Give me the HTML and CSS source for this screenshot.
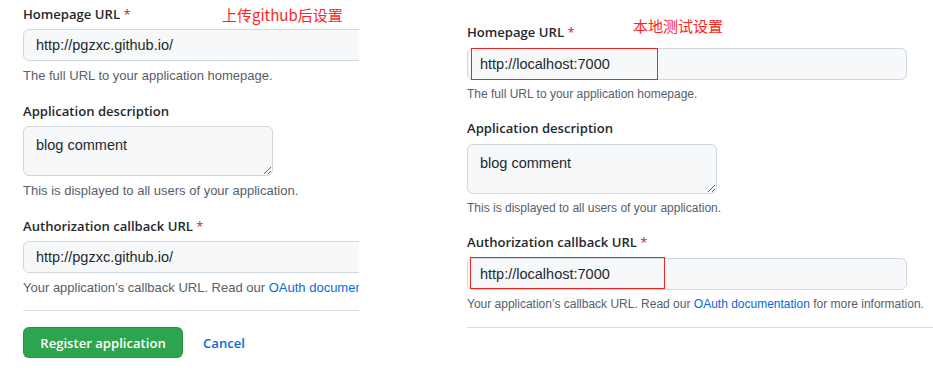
FILE: index.html
```html
<!DOCTYPE html>
<html lang="en">
<head>
<meta charset="utf-8">
<title>Register a new OAuth application</title>
<link rel="stylesheet" href="styles.css">
</head>
<body>
<div class="page">
  <section class="panel panel-left">
    <form class="form">
      <div class="field">
        <label class="label">Homepage URL <span class="req">*</span></label>
        <div class="input-wrap"><input class="input" type="text" value="http://pgzxc.github.io/"></div>
        <p class="note">The full URL to your application homepage.</p>
      </div>
      <div class="field">
        <label class="label">Application description</label>
        <textarea class="textarea">blog comment</textarea>
        <p class="note">This is displayed to all users of your application.</p>
      </div>
      <div class="field">
        <label class="label">Authorization callback URL <span class="req">*</span></label>
        <div class="input-wrap"><input class="input" type="text" value="http://pgzxc.github.io/"></div>
        <p class="note">Your application’s callback URL. Read our <a class="link" href="#">OAuth documentation</a> for more information.</p>
      </div>
      <hr class="rule">
      <div class="actions">
        <button class="btn-primary" type="button">Register application</button>
        <a class="cancel" href="#">Cancel</a>
      </div>
    </form>
    <span class="annot annot-left">上传github后设置</span>
  </section>

  <section class="panel panel-right">
    <form class="form">
      <div class="field">
        <label class="label">Homepage URL <span class="req">*</span></label>
        <div class="input-wrap"><input class="input" type="text" value="http://localhost:7000"><span class="mark mark-home"></span></div>
        <p class="note">The full URL to your application homepage.</p>
      </div>
      <div class="field">
        <label class="label">Application description</label>
        <textarea class="textarea">blog comment</textarea>
        <p class="note">This is displayed to all users of your application.</p>
      </div>
      <div class="field">
        <label class="label">Authorization callback URL <span class="req">*</span></label>
        <div class="input-wrap"><input class="input" type="text" value="http://localhost:7000"><span class="mark mark-cb"></span></div>
        <p class="note">Your application’s callback URL. Read our <a class="link" href="#">OAuth documentation</a> for more information.</p>
      </div>
      <hr class="rule">
    </form>
    <span class="annot annot-right">本地测试设置</span>
  </section>
</div>
</body>
</html>
```

FILE: styles.css
```css
* { box-sizing: border-box; }

html, body {
  margin: 0;
  padding: 0;
  background: #ffffff;
}

body {
  font-family: "Liberation Sans", Arial, "Noto Sans CJK SC", sans-serif;
  color: #24292f;
  width: 933px;
  height: 383px;
  overflow: hidden;
}

.page {
  display: flex;
  width: 933px;
  height: 383px;
}

.panel {
  position: relative;
  overflow: hidden;
  flex: none;
}

.panel-left {
  width: 359px;
  padding: 4px 0 0 23px;
}

.panel-right {
  width: 574px;
  padding: 22px 0 0 108px;
}

.form {
  width: 440px;
  margin: 0;
}

.panel-right .form {
  width: 480px;
}

.field {
  margin-bottom: 16px;
}

.panel-right .field {
  margin-bottom: 15px;
}

.label {
  display: block;
  font-family: "Open Sans", "Liberation Sans", sans-serif;
  font-size: 13.1px;
  line-height: 20px;
  font-weight: 600;
  color: #24292f;
  margin-bottom: 5px;
}

.panel-right .label { margin-bottom: 6px; }

.req {
  color: #cf222e;
  font-weight: 400;
}

.input-wrap {
  position: relative;
  width: 440px;
}

.input {
  display: block;
  width: 440px;
  height: 32px;
  padding: 5px 12px;
  font-family: inherit;
  font-size: 14.5px;
  line-height: 20px;
  color: #24292f;
  background: #f6f8fa;
  border: 1px solid #d0d7de;
  border-radius: 6px;
  outline: none;
}

.textarea {
  display: block;
  width: 250px;
  height: 50px;
  padding: 8px 12px;
  font-family: inherit;
  font-size: 14.5px;
  line-height: 20px;
  color: #24292f;
  background: #f6f8fa;
  border: 1px solid #d0d7de;
  border-radius: 6px;
  resize: vertical;
  outline: none;
}

.note {
  margin: 5px 0 0;
  font-size: 12px;
  line-height: 18px;
  color: #57606a;
  white-space: nowrap;
}

.panel-left .note {
  font-size: 13px;
  line-height: 19px;
}

.link {
  color: #0969da;
  text-decoration: none;
}

.rule {
  height: 0;
  margin: -1px 0 0;
  border: 0;
  border-top: 1px solid #d8dee4;
}

.panel-left .rule {
  margin-top: -3px;
}

.actions {
  display: flex;
  align-items: center;
  margin-top: 16px;
}

.btn-primary {
  width: 160px;
  height: 31px;
  padding: 0;
  font-family: "Open Sans", "Liberation Sans", sans-serif;
  font-size: 13.1px;
  font-weight: 600;
  white-space: nowrap;
  color: #ffffff;
  background: #2da44e;
  border: 1px solid rgba(27, 31, 36, 0.15);
  border-radius: 6px;
}

.cancel {
  margin-left: 20px;
  font-family: "Open Sans", "Liberation Sans", sans-serif;
  font-size: 13.1px;
  font-weight: 600;
  color: #0969da;
  text-decoration: none;
}

.mark {
  position: absolute;
  z-index: 2;
  display: block;
  border: 1px solid #f02424;
  background: transparent;
  pointer-events: none;
}

.mark-home {
  left: 4px;
  top: 0;
  width: 187px;
  height: 32px;
}

.mark-cb {
  left: 3px;
  top: -1px;
  width: 195px;
  height: 32px;
}

.annot {
  position: absolute;
  font-family: "Noto Sans CJK SC", "Liberation Sans", sans-serif;
  font-size: 15px;
  line-height: 20px;
  color: #ff1f1f;
  white-space: nowrap;
}

.annot-left {
  left: 222px;
  top: 5px;
}

.annot-right {
  left: 274px;
  top: 16px;
}
```
